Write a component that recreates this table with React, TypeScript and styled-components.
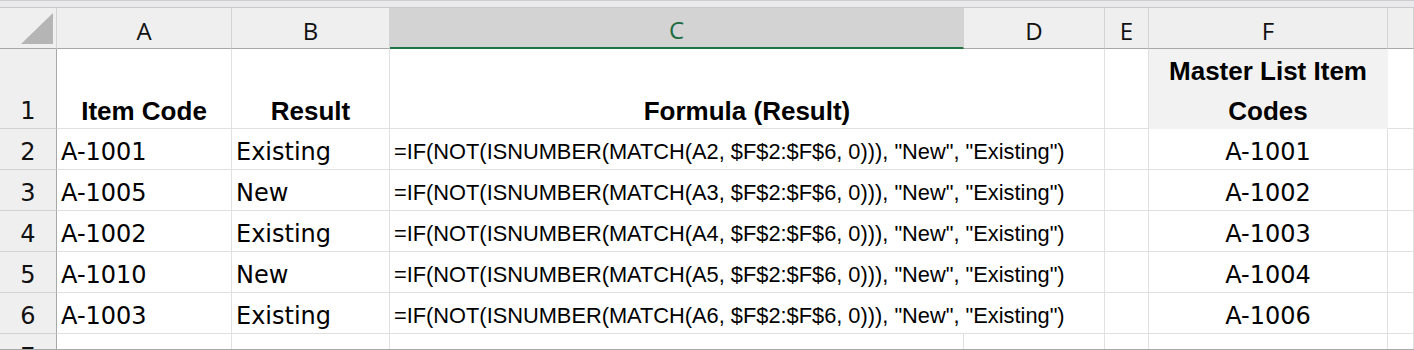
import React from 'react';
import styled, { createGlobalStyle, css } from 'styled-components';

const GlobalStyle = createGlobalStyle`
    html, body {
        margin: 0;
        padding: 0;
        background: #fff;
    }
    body {
        width: 1414px;
        height: 350px;
        overflow: hidden;
    }
`;

const GRID = '#e0e0e0';
const HEAD_BG = '#efefef';
const HEAD_LINE = '#d3d3d3';
const HEAD_EDGE = '#a8a8a8';

const Sheet = styled.div`
    width: 1414px;
    height: 350px;
    box-sizing: border-box;
    border-bottom: 1px solid #a9a9a9;
    background: #fff;
    overflow: hidden;
    display: flex;
    flex-direction: column;
`;

const TopStrip = styled.div`
    flex-shrink: 0;
    height: 8px;
    box-sizing: border-box;
    background: #eaeaec;
    border-top: 1px solid #cdcdd0;
    border-bottom: 1px solid #c9c9c9;
`;

const Grid = styled.div`
    flex-shrink: 0;
    display: grid;
    grid-template-columns: 57px 175px 158px 574px 141px 44px 239px 26px;
    grid-template-rows: 41px 80px repeat(6, 41px);
`;

const Corner = styled.div`
    box-sizing: border-box;
    background: ${HEAD_BG};
    border-right: 1px solid ${HEAD_LINE};
    border-bottom: 1px solid ${HEAD_EDGE};

    svg {
        display: block;
    }
`;

const ColHead = styled.div<{ $selected?: boolean }>`
    box-sizing: border-box;
    display: flex;
    align-items: flex-end;
    justify-content: center;
    padding-bottom: 1px;
    background: ${HEAD_BG};
    border-right: 1px solid ${HEAD_LINE};
    border-bottom: 1px solid ${HEAD_EDGE};
    font-family: 'Open Sans', 'Liberation Sans', sans-serif;
    font-size: 24px;
    line-height: 32px;
    color: #111;

    ${(p) =>
        p.$selected &&
        css`
            background: #d3d3d3;
            color: #1d6b3f;
            border-bottom: 2px solid #217346;
        `}
`;

const RowHead = styled.div`
    box-sizing: border-box;
    display: flex;
    align-items: flex-end;
    justify-content: center;
    padding-bottom: 3px;
    background: ${HEAD_BG};
    border-right: 1px solid ${HEAD_EDGE};
    border-bottom: 1px solid ${HEAD_LINE};
    font-family: 'DejaVu Sans', sans-serif;
    font-size: 24px;
    line-height: 28px;
    color: #111;
`;

type Variant = 'text' | 'bold' | 'formula';

const Cell = styled.div<{ $align?: 'left' | 'center'; $span?: number; $fill?: string; $variant?: Variant }>`
    box-sizing: border-box;
    grid-column: span ${(p) => p.$span || 1};
    display: flex;
    align-items: flex-end;
    justify-content: ${(p) => (p.$align === 'center' ? 'center' : 'flex-start')};
    text-align: ${(p) => p.$align || 'left'};
    padding: 0 4px 3px;
    background: ${(p) => p.$fill || '#fff'};
    border-right: 1px solid ${(p) => p.$fill || GRID};
    border-bottom: 1px solid ${(p) => p.$fill || GRID};
    color: #000;
    white-space: nowrap;

    ${(p) =>
        p.$variant === 'bold'
            ? css`
                  padding-bottom: 0;
                  white-space: normal;
                  font-family: 'Liberation Sans', Arial, sans-serif;
                  font-weight: 700;
                  font-size: 26px;
                  line-height: 40px;
              `
            : p.$variant === 'formula'
            ? css`
                  font-family: 'Liberation Sans', Arial, sans-serif;
                  font-size: 21.8px;
                  line-height: 28px;
              `
            : css`
                  font-family: 'DejaVu Sans', sans-serif;
                  font-size: 24px;
                  line-height: 28px;
              `}
`;

const Label = styled.span`
    margin-bottom: -3px;
`;

const rows = [
    { n: 2, code: 'A-1001', result: 'Existing', master: 'A-1001' },
    { n: 3, code: 'A-1005', result: 'New', master: 'A-1002' },
    { n: 4, code: 'A-1002', result: 'Existing', master: 'A-1003' },
    { n: 5, code: 'A-1010', result: 'New', master: 'A-1004' },
    { n: 6, code: 'A-1003', result: 'Existing', master: 'A-1006' },
];

const columns = ['A', 'B', 'C', 'D', 'E', 'F', ''];

const App = () => {
    return (
        <>
            <GlobalStyle />
            <Sheet>
                <TopStrip />
                <Grid>
                    <Corner>
                        <svg width="56" height="40" viewBox="0 0 56 40">
                            <polygon points="53,5 53,36 21,36" fill="#b5b5b5" />
                        </svg>
                    </Corner>
                    {columns.map((c, i) => (
                        <ColHead key={i} $selected={c === 'C'}>
                            {c}
                        </ColHead>
                    ))}

                    <RowHead>1</RowHead>
                    <Cell $variant="bold" $align="center">
                        <Label>Item Code</Label>
                    </Cell>
                    <Cell $variant="bold" $align="center">
                        <Label>Result</Label>
                    </Cell>
                    <Cell $variant="bold" $align="center" $span={2}>
                        <Label>Formula (Result)</Label>
                    </Cell>
                    <Cell />
                    <Cell $variant="bold" $align="center" $fill="#f2f2f2">
                        <Label>Master List Item Codes</Label>
                    </Cell>
                    <Cell />

                    {rows.map((r) => (
                        <React.Fragment key={r.n}>
                            <RowHead>{r.n}</RowHead>
                            <Cell>{r.code}</Cell>
                            <Cell>{r.result}</Cell>
                            <Cell $variant="formula" $span={2}>
                                {`=IF(NOT(ISNUMBER(MATCH(A${r.n}, $F$2:$F$6, 0))), "New", "Existing")`}
                            </Cell>
                            <Cell />
                            <Cell $align="center">{r.master}</Cell>
                            <Cell />
                        </React.Fragment>
                    ))}

                    <RowHead>7</RowHead>
                    <Cell />
                    <Cell />
                    <Cell />
                    <Cell />
                    <Cell />
                    <Cell />
                    <Cell />
                </Grid>
            </Sheet>
        </>
    );
};

export default App;
